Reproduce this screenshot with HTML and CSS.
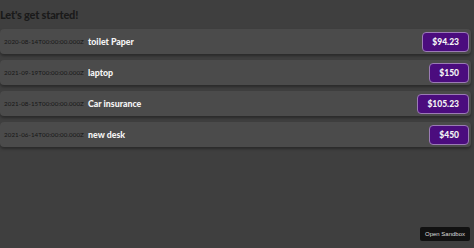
FILE: index.html
```html
<!DOCTYPE html>
<html>
<head>
<meta charset="utf-8">
<link rel="stylesheet" href="styles.css">
</head>
<body>
<div class="app">
  <h2 class="title">Let's get started!</h2>
  <div class="list">
    <div class="item">
      <div class="date">2020-08-14T00:00:00.000Z</div>
      <div class="desc">toilet Paper</div>
      <div class="price">$94.23</div>
    </div>
    <div class="item">
      <div class="date">2021-09-19T00:00:00.000Z</div>
      <div class="desc">laptop</div>
      <div class="price">$150</div>
    </div>
    <div class="item">
      <div class="date">2021-08-15T00:00:00.000Z</div>
      <div class="desc">Car insurance</div>
      <div class="price">$105.23</div>
    </div>
    <div class="item">
      <div class="date">2021-06-14T00:00:00.000Z</div>
      <div class="desc">new desk</div>
      <div class="price">$450</div>
    </div>
  </div>
</div>
<button class="sandbox">Open Sandbox</button>
</body>
</html>
```
FILE: styles.css
```css
html, body {
  margin: 0;
  padding: 0;
  background: #3f3f3f;
  height: 100%;
  overflow: hidden;
  font-family: "Lato", "Open Sans", sans-serif;
}
.app {
  padding: 0 3px 0 0;
}
.title {
  margin: 0;
  padding: 8px 0 0 0;
  height: 21px;
  font-size: 11px;
  font-weight: 900;
  letter-spacing: -0.2px;
  color: #1a1a1a;
  line-height: 14px;
}
.list {
  display: flex;
  flex-direction: column;
  gap: 6px;
}
.item {
  display: flex;
  align-items: center;
  height: 25px;
  background: #4b4b4b;
  border-radius: 4px;
  box-shadow: 0 2px 3px rgba(0,0,0,0.35);
  padding: 0 2px 0 4px;
}
.date {
  font-size: 6.2px;
  letter-spacing: 0.1px;
  color: #161616;
  width: 84px;
  white-space: nowrap;
}
.desc {
  flex: 1;
  font-size: 8.8px;
  font-weight: 900;
  color: #f4f4f4;
}
.price {
  background: #4b0c7e;
  border: 1px solid #9b7bb5;
  border-radius: 4px;
  color: #f4f4f4;
  font-size: 8.5px;
  font-weight: 900;
  padding: 0 9px;
  height: 18px;
  line-height: 18px;
}
.sandbox {
  position: fixed;
  right: 4px;
  bottom: 7px;
  background: #111;
  color: #ddd;
  border: none;
  border-radius: 2px;
  font-family: "Liberation Sans", sans-serif;
  font-size: 6px;
  padding: 0 5px;
  height: 14px;
}
```
